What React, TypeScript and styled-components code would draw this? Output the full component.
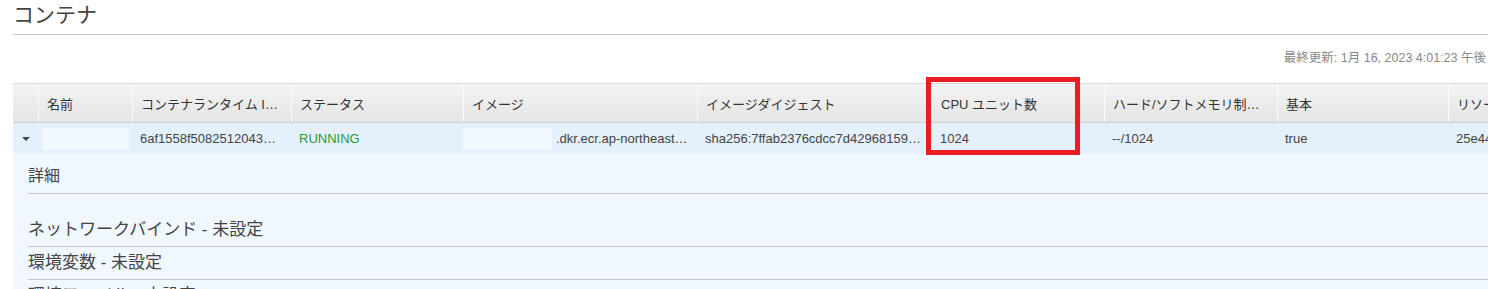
import styled, { createGlobalStyle } from 'styled-components';

const GlobalStyle = createGlobalStyle`
  html, body {
    margin: 0;
    padding: 0;
    background: #fff;
  }
  body {
    font-family: "Liberation Sans", "Noto Sans CJK JP", sans-serif;
    color: #444;
    overflow: hidden;
  }
`;

const Page = styled.div`
  padding-left: 13px;
  width: 1475px;
  height: 289px;
  overflow: hidden;
`;

const Title = styled.h2`
  margin: 0;
  padding: 2px 0 6px;
  font-size: 21px;
  line-height: 26px;
  font-weight: normal;
  color: #444;
  border-bottom: 1px solid #ccc;
`;

const Updated = styled.div`
  margin: 17px 0 18px;
  padding-right: 2px;
  text-align: right;
  font-size: 12.5px;
  line-height: 13px;
  color: #888;
  white-space: nowrap;
`;

const TableWrap = styled.div`
  position: relative;
`;

const Grid = styled.div`
  width: 1475px;
  overflow: hidden;
`;

const HeadRow = styled.div`
  display: flex;
  height: 38px;
  border-top: 1px solid #dadada;
  border-bottom: 1px solid #cfcfcf;
  background: linear-gradient(#f4f4f4, #e4e4e4);
`;

const HeadCell = styled.div<{ $w: number }>`
  flex: 0 0 ${(p) => p.$w}px;
  box-sizing: border-box;
  padding-left: 8px;
  display: flex;
  align-items: center;
  font-size: 13px;
  color: #333;
  white-space: nowrap;
  overflow: hidden;
  & + & {
    border-left: 1px solid #fbfbfb;
  }
`;

const DataRow = styled.div`
  display: flex;
  height: 31px;
  background: #e4f0fc;
`;

const Cell = styled.div<{ $w: number; $pad?: number }>`
  flex: 0 0 ${(p) => p.$w}px;
  box-sizing: border-box;
  padding-left: ${(p) => (p.$pad ?? 8)}px;
  display: flex;
  align-items: center;
  font-size: 13px;
  color: #444;
  white-space: nowrap;
  overflow: hidden;
`;

const Ellip = styled.span`
  overflow: hidden;
  text-overflow: ellipsis;
  white-space: nowrap;
`;

const Status = styled.span`
  color: #2a9a3a;
`;

const Caret = styled.span`
  display: block;
  margin-left: 9px;
  margin-top: 1px;
  width: 0;
  height: 0;
  border-left: 4px solid transparent;
  border-right: 4px solid transparent;
  border-top: 4px solid #444;
`;

const Redacted = styled.span<{ $w: number }>`
  flex: 0 0 ${(p) => p.$w}px;
  height: 22px;
  margin-right: 4px;
  background: #f1f8fe;
`;

const Highlight = styled.div`
  position: absolute;
  left: 913px;
  top: -6px;
  width: 154px;
  height: 78px;
  box-sizing: border-box;
  border: 5px solid #ec1c24;
  pointer-events: none;
`;

const Detail = styled.div`
  background: #f0f7fe;
  padding-left: 15px;
  min-height: 200px;
`;

const DetailHead = styled.div`
  padding: 12px 0 8px;
  font-size: 16px;
  line-height: 19px;
  color: #444;
  border-bottom: 1px solid #c8c8c8;
`;

const Section = styled.div<{ $first?: boolean }>`
  margin-top: ${(p) => (p.$first ? 20 : 0)}px;
  padding: 6px 0;
  font-size: 17px;
  line-height: 20px;
  color: #444;
  border-bottom: 1px solid #c8c8c8;
`;

const cols = [
  { key: 'exp', label: '', w: 25 },
  { key: 'name', label: '名前', w: 94 },
  { key: 'runtime', label: 'コンテナランタイム I…', w: 159 },
  { key: 'status', label: 'ステータス', w: 172 },
  { key: 'image', label: 'イメージ', w: 234 },
  { key: 'digest', label: 'イメージダイジェスト', w: 235 },
  { key: 'cpu', label: 'CPU ユニット数', w: 172 },
  { key: 'mem', label: 'ハード/ソフトメモリ制…', w: 173 },
  { key: 'essential', label: '基本', w: 171 },
  { key: 'resource', label: 'リソース ID', w: 200 },
];

const w = (k: string) => cols.find((c) => c.key === k)!.w;

export default function App() {
  return (
    <>
      <GlobalStyle />
      <Page>
        <Title>コンテナ</Title>
        <Updated>最終更新: 1月 16, 2023 4:01:23 午後</Updated>
        <TableWrap>
          <Grid>
            <HeadRow>
              {cols.map((c) => (
                <HeadCell key={c.key} $w={c.w}>
                  {c.label}
                </HeadCell>
              ))}
            </HeadRow>
            <DataRow>
              <Cell $w={w('exp')} $pad={0}>
                <Caret />
              </Cell>
              <Cell $w={w('name')} $pad={4}>
                <Redacted $w={87} />
              </Cell>
              <Cell $w={w('runtime')}>
                <Ellip>6af1558f5082512043…</Ellip>
              </Cell>
              <Cell $w={w('status')}>
                <Status>RUNNING</Status>
              </Cell>
              <Cell $w={w('image')} $pad={0}>
                <Redacted $w={89} />
                <Ellip>.dkr.ecr.ap-northeast…</Ellip>
              </Cell>
              <Cell $w={w('digest')}>
                <Ellip>sha256:7ffab2376cdcc7d42968159…</Ellip>
              </Cell>
              <Cell $w={w('cpu')}>1024</Cell>
              <Cell $w={w('mem')}>--/1024</Cell>
              <Cell $w={w('essential')}>true</Cell>
              <Cell $w={w('resource')}>25e44a1c</Cell>
            </DataRow>
            <Detail>
              <DetailHead>詳細</DetailHead>
              <Section $first>ネットワークバインド - 未設定</Section>
              <Section>環境変数 - 未設定</Section>
              <Section>環境ファイル - 未設定</Section>
            </Detail>
          </Grid>
          <Highlight />
        </TableWrap>
      </Page>
    </>
  );
}
